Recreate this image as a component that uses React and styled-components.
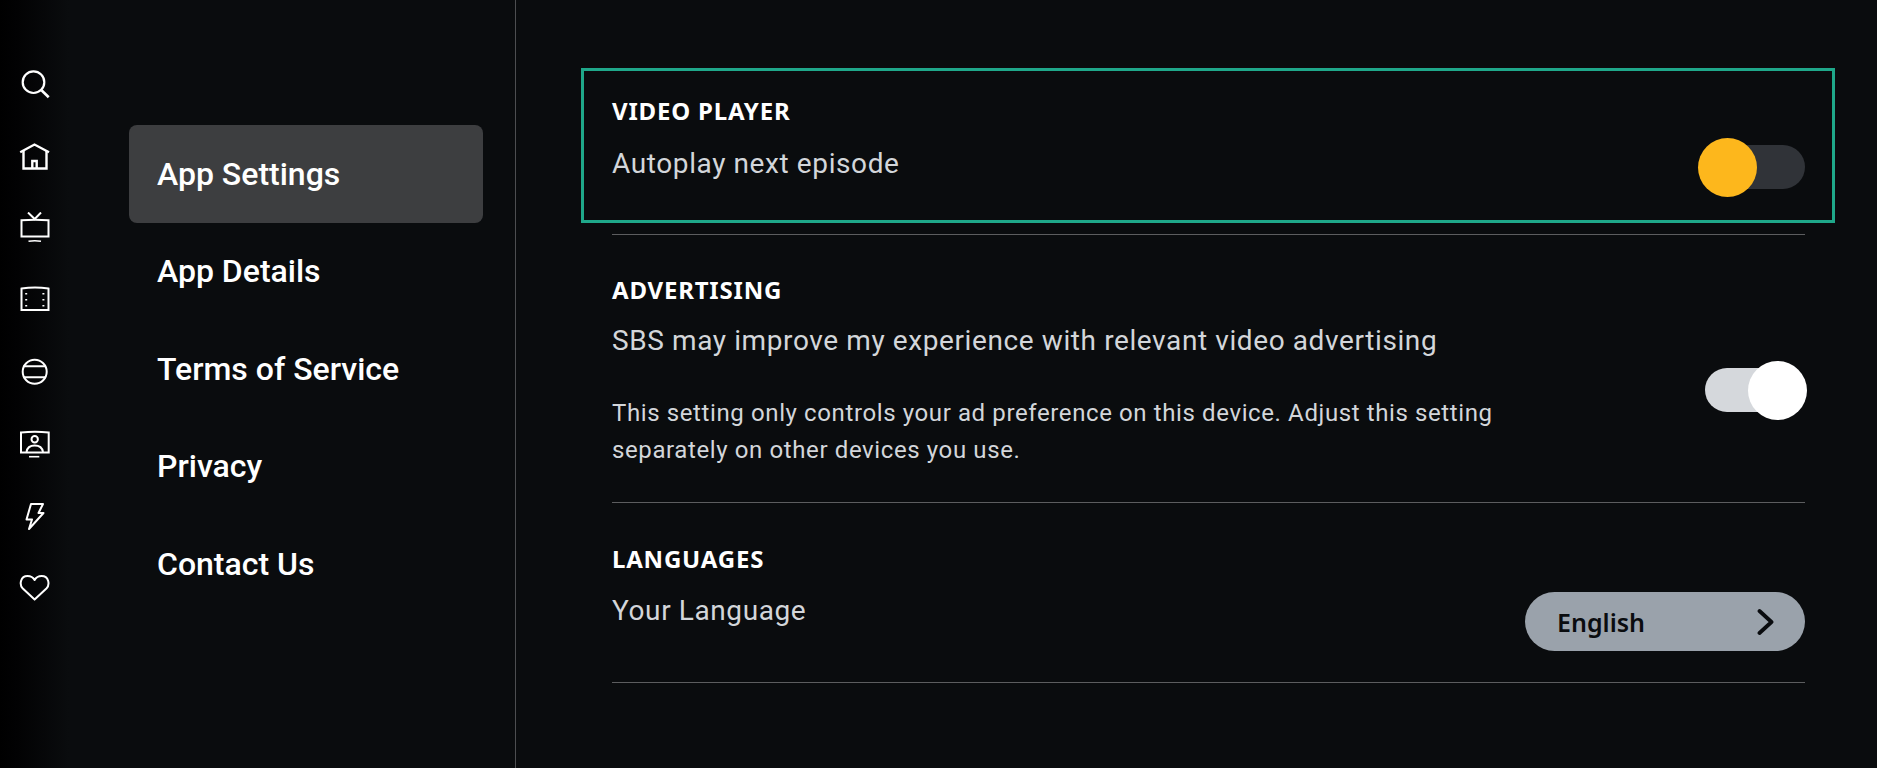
import React from "react";
import styled, { createGlobalStyle } from "styled-components";

const Global = createGlobalStyle`
  html, body { margin: 0; padding: 0; background: #0a0c0e; }
  body { font-family: Roboto, "Liberation Sans", sans-serif; overflow: hidden; }
`;
const Page = styled.div`
  display: flex; width: 1877px; height: 768px; overflow: hidden; background: #0a0c0e;
`;
const Rail = styled.nav`
  width: 69px; flex: none; display: flex; flex-direction: column; align-items: center;
  padding-top: 48px; box-sizing: border-box;
  background: linear-gradient(90deg, #000 0%, #020203 25%, #0a0c0e 100%);
`;
const RailItem = styled.div`
  height: 72px; display: flex; align-items: center; justify-content: center;
`;
const Icon = styled.svg`
  width: 32px; height: 32px; fill: none; stroke: #fff; stroke-width: 2; display: block;
`;
const SideNav = styled.aside`
  width: 447px; height: 100%; flex: none; box-sizing: border-box;
  padding: 125px 32px 0 60px;
  border-right: 1px solid #4d4e50; display: flex; flex-direction: column;
`;
const NavItem = styled.div`
  height: 97.5px; flex: none;
  display: flex; align-items: center; padding-left: 28px; border-radius: 8px;
  background: ${p => (p.$active ? "#3d3e40" : "transparent")};
  color: #fff; font-size: 32px; font-weight: 500;
`;
const Main = styled.main`
  flex: 1; padding: 68px 0 0 96px; box-sizing: border-box; min-width: 0;
`;
const Column = styled.div`
  width: 1193px; display: flex; flex-direction: column;
`;
const Focus = styled.div`
  margin: 0 -30px 11px -31px; padding: 0 27px 0 28px; border: 3px solid #1fa88a; height: 155px; box-sizing: border-box;
  display: flex; justify-content: space-between; align-items: flex-start;
`;
const Rule = styled.div`
  height: 1px; background: #5c5d5f;
`;
const Section = styled.section`
  display: flex; justify-content: space-between; align-items: flex-start;
  height: ${p => p.$h}px; box-sizing: border-box; padding-top: ${p => p.$pt}px;
`;
const TextBlock = styled.div`
  padding-top: ${p => p.$pt || 0}px;
`;
const Control = styled.div`
  padding-top: ${p => p.$pt}px;
`;
const Heading = styled.h2`
  margin: 0; color: #fff; font: 700 24px/28px "Noto Sans", sans-serif; letter-spacing: 0.8px;
`;
const Label = styled.div`
  color: #d3d6da; font-size: 28px; line-height: 36px; letter-spacing: 0.6px; margin-top: ${p => p.$mt}px;
`;
const Note = styled.p`
  color: #d3d6da; font-size: 24px; line-height: 37px; letter-spacing: 0.61px; margin: 36px 0 0; width: 930px;
`;
const Track = styled.div`
  width: 100px; height: 44px; border-radius: 22px; position: relative; flex: none;
  background: ${p => (p.$on ? "#d5d8dc" : "#303338")};
`;
const Knob = styled.div`
  position: absolute; top: -7px; width: 59px; height: 59px; border-radius: 50%;
  left: ${p => (p.$on ? "43px" : "-7px")};
  background: ${p => p.$c};
`;
const Pill = styled.div`
  width: 280px; height: 59px; border-radius: 30px; background: #9aa2ab; flex: none;
  display: flex; align-items: center; justify-content: space-between; padding: 0 30px 0 32px; box-sizing: border-box;
  color: #0a0c0f; font: 600 25px "Noto Sans", sans-serif;
`;

const Search = () => <Icon viewBox="0 0 32 32"><circle cx="14.5" cy="14.2" r="10.8" strokeWidth="2.2" /><path d="M22.5 22.3 L29.7 29.3" strokeWidth="2.6" /></Icon>;
const Home = () => <Icon viewBox="0 0 32 32"><path d="M1.2 12.2 L15.5 4.5 L30 12.2" strokeWidth="2.4" /><path d="M4.5 10.7 V28.5 H27.5 V10.7 M13.3 28.5 V21 H17.7 V28.5" strokeWidth="2.4" /></Icon>;
const Tv = () => <Icon viewBox="0 0 32 32"><path d="M9 .5 L15.7 7 L22 .5" /><path d="M2.5 8.2 Q16 7.2 29.5 8.2 V24.6 H2.5 Z" /><path d="M9.5 29.2 Q15.7 28.2 22 29.2" strokeWidth="1.6" /></Icon>;
const Film = () => <Icon viewBox="0 0 32 32"><path d="M2.5 4.5 Q16 2.5 29.5 4.5 V26 H2.5 Z" /><path d="M7.2 9v1.6M7.2 15v1.6M7.2 21v1.6M24.4 9v1.6M24.4 15v1.6M24.4 21v1.6" strokeWidth="2" /></Icon>;
const Ball = () => <Icon viewBox="0 0 32 32"><circle cx="15.7" cy="15.7" r="12" /><path d="M4.5 10.2 H27 M4.5 21.2 H27" /></Icon>;
const Screen = () => <Icon viewBox="0 0 32 32"><path d="M2 4.5 Q16 3 29.7 4.5 V24.5 H2 Z" /><circle cx="15.7" cy="11.3" r="3.2" /><path d="M7.5 24 Q8.5 17.5 15.7 17.5 Q23 17.5 24 24" /><path d="M10 28.7 H20.3" strokeWidth="1.6" /></Icon>;
const Bolt = () => <Icon viewBox="0 0 32 32"><path d="M12 4 H24 L19.5 13 H24.5 L10 29 L13 19.5 H7.5 Z" strokeLinejoin="round" /></Icon>;
const Heart = () => <Icon viewBox="0 0 32 32"><path d="M15.6 27.6 L3.8 16.5 C0 12.5 1.5 4 8.5 4 C11.5 4 14.5 6 15.6 8 C16.7 6 19.7 4 22.7 4 C29.7 4 31.2 12.5 27.4 16.5 Z" strokeLinejoin="round" /></Icon>;
const Chevron = () => <svg width="18" height="28" viewBox="0 0 18 28" fill="none" stroke="#0a0c0f" strokeWidth="3.8" strokeLinecap="round" strokeLinejoin="round"><path d="M2.5 3 L14.5 14 L2.5 25" /></svg>;

const icons = [Search, Home, Tv, Film, Ball, Screen, Bolt, Heart];
const links = ["App Settings", "App Details", "Terms of Service", "Privacy", "Contact Us"];

export default function App() {
  return (
    <Page>
      <Global />
      <Rail>{icons.map((I, i) => <RailItem key={i}><I /></RailItem>)}</Rail>
      <SideNav>{links.map((l, i) => <NavItem key={l} $active={i === 0}>{l}</NavItem>)}</SideNav>
      <Main>
        <Column>
          <Focus>
            <TextBlock $pt={26}>
              <Heading>VIDEO PLAYER</Heading>
              <Label $mt={21}>Autoplay next episode</Label>
            </TextBlock>
            <Control $pt={74}><Track><Knob $c="#fdb71c" /></Track></Control>
          </Focus>
          <Rule />
          <Section $h={267} $pt={41}>
            <TextBlock>
              <Heading>ADVERTISING</Heading>
              <Label $mt={19}>SBS may improve my experience with relevant video advertising</Label>
              <Note>This setting only controls your ad preference on this device. Adjust this setting separately on other devices you use.</Note>
            </TextBlock>
            <Control $pt={92}><Track $on><Knob $on $c="#fff" /></Track></Control>
          </Section>
          <Rule />
          <Section $h={179} $pt={42}>
            <TextBlock>
              <Heading>LANGUAGES</Heading>
              <Label $mt={20}>Your Language</Label>
            </TextBlock>
            <Control $pt={47}><Pill>English<Chevron /></Pill></Control>
          </Section>
          <Rule />
        </Column>
      </Main>
    </Page>
  );
}
